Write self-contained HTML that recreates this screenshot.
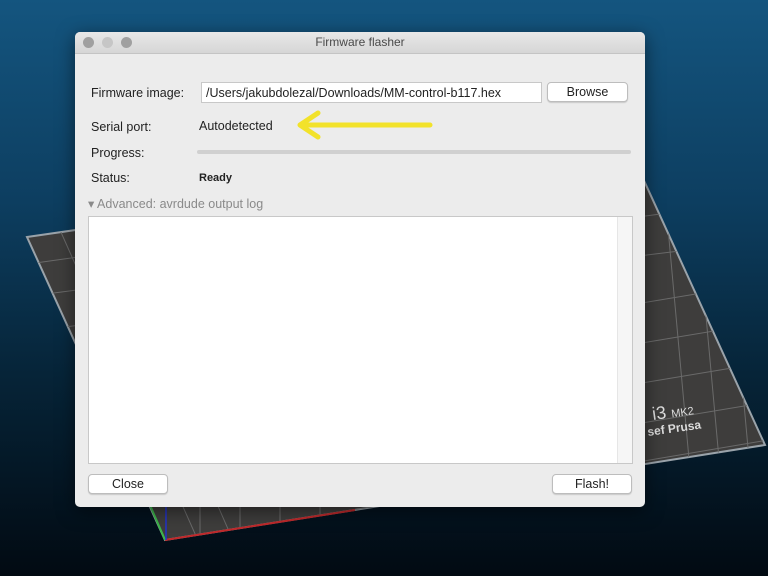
<!DOCTYPE html>
<html><head><meta charset="utf-8"><style>
body{margin:0;width:768px;height:576px;overflow:hidden;background:linear-gradient(#14557f 0%,#0d3e60 35%,#062438 65%,#020a12 100%);font-family:"Liberation Sans",sans-serif;position:relative}
.win{position:absolute;left:75px;top:32px;width:570px;height:475px;background:#ececec;border-radius:5px;overflow:hidden;box-shadow:0 4px 18px rgba(0,0,0,.5)}
.tb{height:21px;background:linear-gradient(#e8e8e8,#d6d6d6);border-bottom:1px solid #c4c4c4;text-align:center;font-size:12px;line-height:21px;color:#4a4a4a}
.dot{position:absolute;top:5px;width:11px;height:11px;border-radius:50%;background:#a0a0a0}
.t{position:absolute;font-size:12.5px;color:#222}
.in{position:absolute;background:#fff;border:1px solid #c8c8c8}
.btn{position:absolute;background:#fff;border:1px solid #bdbdbd;border-radius:4px;font-size:12.5px;text-align:center;color:#222;box-shadow:0 1px 1px rgba(0,0,0,.15)}
</style></head><body>
<svg width="768" height="576" style="position:absolute;left:0;top:0">
<defs><clipPath id="c"><polygon points="27,237 630,150 765,445 165,540"/></clipPath></defs>
<polygon points="27,237 630,150 765,445 165,540" fill="#3e3d3c" stroke="#9aa3aa" stroke-width="2"/>
<g stroke="#6a6a6a" stroke-width="1" clip-path="url(#c)">
<line x1="0" y1="268" x2="768" y2="160"/><line x1="0" y1="300" x2="768" y2="200"/><line x1="0" y1="335" x2="768" y2="240"/>
<line x1="0" y1="410" x2="768" y2="282"/><line x1="0" y1="450" x2="768" y2="322"/><line x1="0" y1="490" x2="768" y2="362"/><line x1="0" y1="530" x2="768" y2="402"/><line x1="0" y1="570" x2="768" y2="440"/>
<line x1="60" y1="230" x2="200" y2="545"/><line x1="95" y1="225" x2="235" y2="545"/><line x1="660" y1="140" x2="690" y2="470"/><line x1="690" y1="140" x2="720" y2="470"/><line x1="720" y1="140" x2="750" y2="470"/>
<line x1="200" y1="500" x2="200" y2="545"/><line x1="240" y1="500" x2="240" y2="545"/><line x1="280" y1="500" x2="280" y2="545"/><line x1="320" y1="500" x2="320" y2="545"/>
</g>
<line x1="165" y1="540" x2="355" y2="510" stroke="#c0282a" stroke-width="2"/>
<line x1="165" y1="540" x2="150" y2="505" stroke="#3bb54a" stroke-width="2"/>
<line x1="166" y1="540" x2="166" y2="505" stroke="#2233cc" stroke-width="1.5"/>
<text x="653" y="420" fill="#ddd" font-size="18" font-family="Liberation Sans" transform="rotate(-8 653 420)">i3 <tspan font-size="11">MK2</tspan></text>
<text x="648" y="436" fill="#ddd" font-size="12" font-weight="bold" font-family="Liberation Sans" transform="rotate(-8 648 436)">sef Prusa</text>
</svg>
<div class="win">
<div class="tb">Firmware flasher</div>
<div class="dot" style="left:8px"></div><div class="dot" style="left:27px;background:#c6c6c6"></div><div class="dot" style="left:46px"></div>
<div class="t" style="left:16px;top:54px">Firmware image:</div>
<div class="in" style="left:126px;top:50px;width:339px;height:19px"><span class="t" style="left:4px;top:3px">/Users/jakubdolezal/Downloads/MM-control-b117.hex</span></div>
<div class="btn" style="left:472px;top:50px;width:79px;height:18px;line-height:18px">Browse</div>
<div class="t" style="left:16px;top:88px">Serial port:</div>
<div class="t" style="left:124px;top:87px">Autodetected</div>
<div class="t" style="left:16px;top:114px">Progress:</div>
<div style="position:absolute;left:122px;top:118px;width:434px;height:4px;background:#d0d0d0;border-radius:2px"></div>
<div class="t" style="left:16px;top:139px">Status:</div>
<div class="t" style="left:124px;top:140px;font-size:11px;font-weight:bold">Ready</div>
<div class="t" style="left:13px;top:164px;color:#8a8a8a">▾ Advanced: avrdude output log</div>
<div class="in" style="left:13px;top:184px;width:543px;height:246px"><div style="position:absolute;right:0;top:0;width:14px;height:100%;background:#f6f6f6;border-left:1px solid #e6e6e6"></div></div>
<div class="btn" style="left:13px;top:442px;width:78px;height:18px;line-height:18px">Close</div>
<div class="btn" style="left:477px;top:442px;width:78px;height:18px;line-height:18px">Flash!</div>
</div>
<svg width="768" height="576" style="position:absolute;left:0;top:0">
<g stroke="#f2e22a" stroke-width="5" stroke-linecap="round" stroke-linejoin="round" fill="none">
<line x1="302" y1="125" x2="430" y2="125"/><polyline points="318,113 300,125 318,137"/>
</g>
</svg>
</body></html>
